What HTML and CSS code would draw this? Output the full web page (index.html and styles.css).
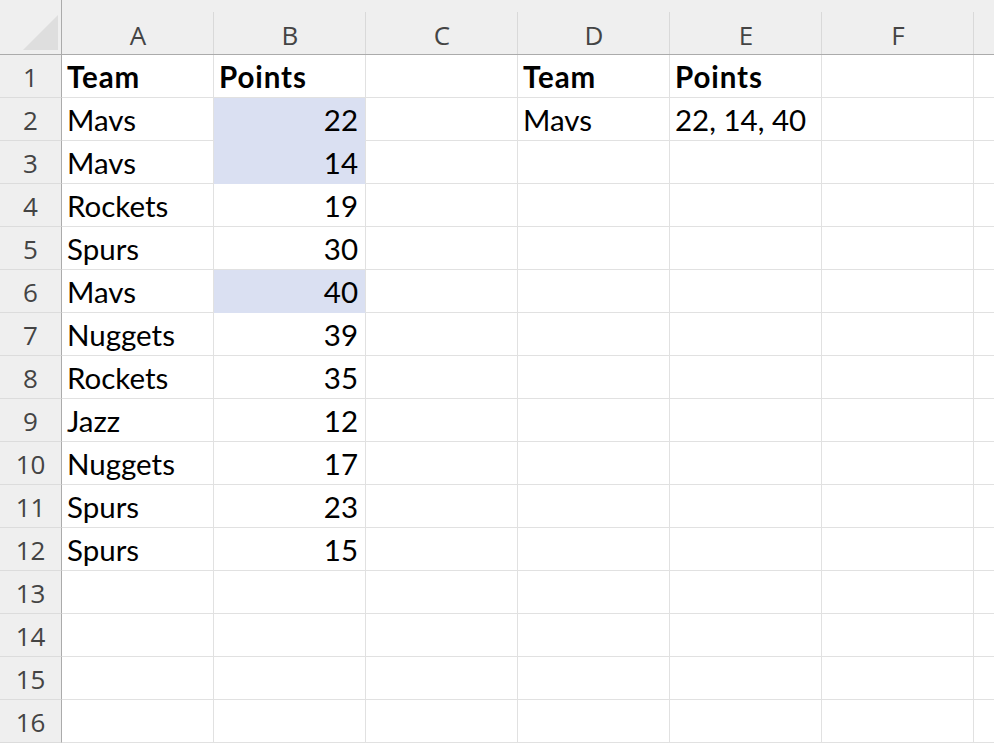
FILE: index.html
```html
<!DOCTYPE html>
<html>
<head>
<meta charset="utf-8">
<link rel="stylesheet" href="styles.css">
</head>
<body>
<div class="sheet">
  <div class="corner"><svg class="tri" width="36" height="36" viewBox="0 0 36 36"><polygon points="0,35 35,0 35,35" fill="#dedede"/></svg></div>
  <div class="colhead">A</div>
  <div class="colhead">B</div>
  <div class="colhead">C</div>
  <div class="colhead">D</div>
  <div class="colhead">E</div>
  <div class="colhead">F</div>
  <div class="colhead last"></div>

  <div class="rowhead">1</div>
  <div class="cell bold">Team</div>
  <div class="cell bold">Points</div>
  <div class="cell"></div>
  <div class="cell bold">Team</div>
  <div class="cell bold">Points</div>
  <div class="cell"></div>
  <div class="cell last"></div>

  <div class="rowhead">2</div>
  <div class="cell">Mavs</div>
  <div class="cell num sel">22</div>
  <div class="cell"></div>
  <div class="cell">Mavs</div>
  <div class="cell">22, 14, 40</div>
  <div class="cell"></div>
  <div class="cell last"></div>

  <div class="rowhead">3</div>
  <div class="cell">Mavs</div>
  <div class="cell num sel">14</div>
  <div class="cell"></div><div class="cell"></div><div class="cell"></div><div class="cell"></div><div class="cell last"></div>

  <div class="rowhead">4</div>
  <div class="cell">Rockets</div>
  <div class="cell num">19</div>
  <div class="cell"></div><div class="cell"></div><div class="cell"></div><div class="cell"></div><div class="cell last"></div>

  <div class="rowhead">5</div>
  <div class="cell">Spurs</div>
  <div class="cell num">30</div>
  <div class="cell"></div><div class="cell"></div><div class="cell"></div><div class="cell"></div><div class="cell last"></div>

  <div class="rowhead">6</div>
  <div class="cell">Mavs</div>
  <div class="cell num sel">40</div>
  <div class="cell"></div><div class="cell"></div><div class="cell"></div><div class="cell"></div><div class="cell last"></div>

  <div class="rowhead">7</div>
  <div class="cell">Nuggets</div>
  <div class="cell num">39</div>
  <div class="cell"></div><div class="cell"></div><div class="cell"></div><div class="cell"></div><div class="cell last"></div>

  <div class="rowhead">8</div>
  <div class="cell">Rockets</div>
  <div class="cell num">35</div>
  <div class="cell"></div><div class="cell"></div><div class="cell"></div><div class="cell"></div><div class="cell last"></div>

  <div class="rowhead">9</div>
  <div class="cell">Jazz</div>
  <div class="cell num">12</div>
  <div class="cell"></div><div class="cell"></div><div class="cell"></div><div class="cell"></div><div class="cell last"></div>

  <div class="rowhead">10</div>
  <div class="cell">Nuggets</div>
  <div class="cell num">17</div>
  <div class="cell"></div><div class="cell"></div><div class="cell"></div><div class="cell"></div><div class="cell last"></div>

  <div class="rowhead">11</div>
  <div class="cell">Spurs</div>
  <div class="cell num">23</div>
  <div class="cell"></div><div class="cell"></div><div class="cell"></div><div class="cell"></div><div class="cell last"></div>

  <div class="rowhead">12</div>
  <div class="cell">Spurs</div>
  <div class="cell num">15</div>
  <div class="cell"></div><div class="cell"></div><div class="cell"></div><div class="cell"></div><div class="cell last"></div>

  <div class="rowhead">13</div>
  <div class="cell"></div><div class="cell"></div><div class="cell"></div><div class="cell"></div><div class="cell"></div><div class="cell"></div><div class="cell last"></div>

  <div class="rowhead">14</div>
  <div class="cell"></div><div class="cell"></div><div class="cell"></div><div class="cell"></div><div class="cell"></div><div class="cell"></div><div class="cell last"></div>

  <div class="rowhead">15</div>
  <div class="cell"></div><div class="cell"></div><div class="cell"></div><div class="cell"></div><div class="cell"></div><div class="cell"></div><div class="cell last"></div>

  <div class="rowhead">16</div>
  <div class="cell"></div><div class="cell"></div><div class="cell"></div><div class="cell"></div><div class="cell"></div><div class="cell"></div><div class="cell last"></div>
</div>
</body>
</html>
```
FILE: styles.css
```css
html, body {
  margin: 0;
  padding: 0;
  background: #ffffff;
  overflow: hidden;
}

.sheet {
  display: grid;
  grid-template-columns: 62px repeat(6, 152px) 1fr;
  grid-template-rows: 55px repeat(16, 43px);
  width: 994px;
  height: 744px;
}

.corner {
  background: #efefef;
  border-bottom: 1px solid #ababab;
  border-right: 1px solid #ababab;
  box-sizing: border-box;
  display: flex;
  align-items: flex-end;
  justify-content: flex-end;
  padding: 0 2px 3px 0;
}

.tri {
  display: block;
}

.colhead {
  background-color: #efefef;
  background-image: linear-gradient(#d9d9d9, #d9d9d9);
  background-repeat: no-repeat;
  background-position: right bottom;
  background-size: 1px 42px;
  border-bottom: 1px solid #ababab;
  box-sizing: border-box;
  display: flex;
  align-items: center;
  justify-content: center;
  padding-top: 15px;
  font-family: "Open Sans", "Noto Sans", sans-serif;
  font-size: 26px;
  color: #444444;
}

.colhead.last {
  background-image: none;
}

.rowhead {
  background: #efefef;
  border-right: 1px solid #ababab;
  border-bottom: 1px solid #dcdcdc;
  box-sizing: border-box;
  display: flex;
  align-items: center;
  justify-content: center;
  padding-top: 1px;
  font-family: "Open Sans", "Noto Sans", sans-serif;
  font-size: 26px;
  color: #444444;
}

.cell {
  border-right: 1px solid #e1e1e1;
  border-bottom: 1px solid #e1e1e1;
  box-sizing: border-box;
  display: flex;
  align-items: center;
  padding: 1px 7px 0 5px;
  font-family: "Lato", sans-serif;
  font-size: 29.5px;
  color: #000000;
  white-space: nowrap;
  overflow: visible;
}

.cell.last {
  border-right: none;
}

.cell.bold {
  font-weight: 700;
  letter-spacing: 0.9px;
}

.cell.num {
  justify-content: flex-end;
}

.cell.sel {
  background: #dae0f2;
  border-bottom-color: #dae0f2;
}
```
